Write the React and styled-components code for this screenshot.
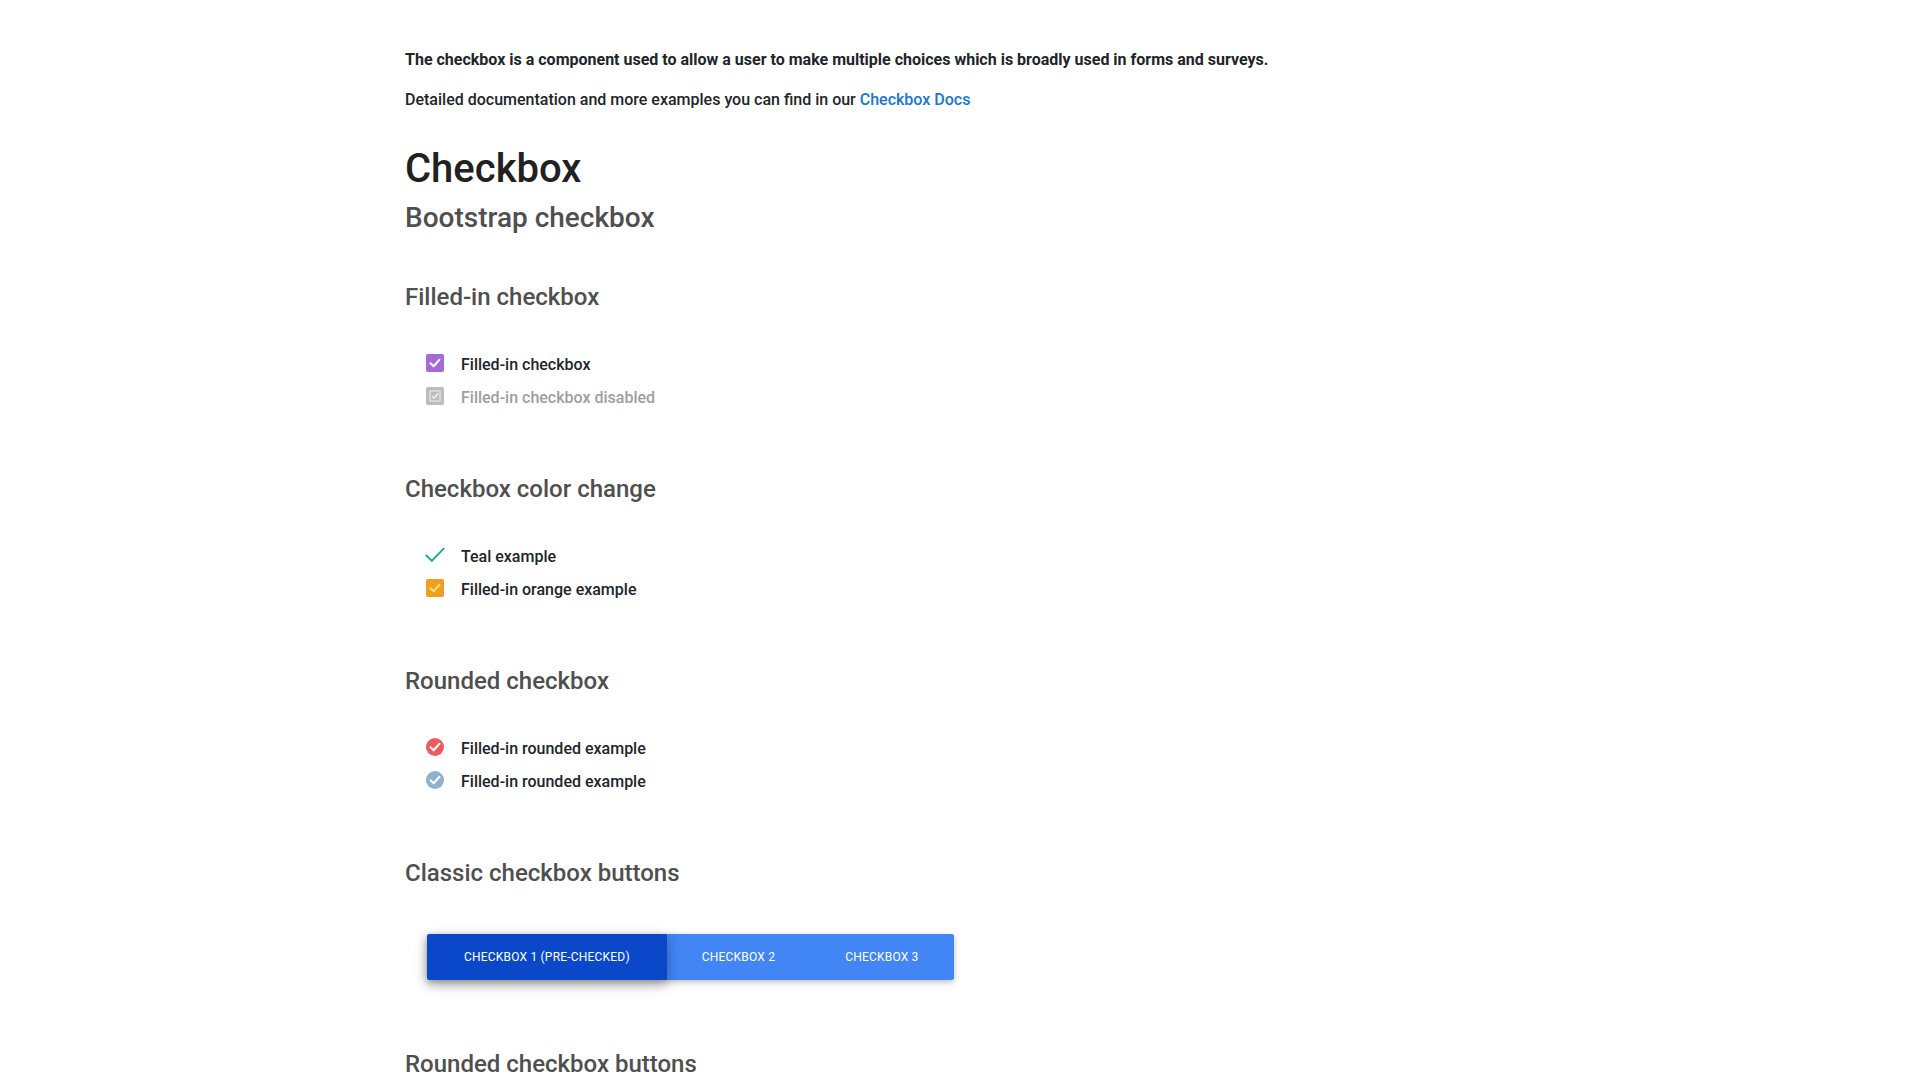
import styled, { createGlobalStyle } from "styled-components";

const GlobalStyle = createGlobalStyle`
  * { box-sizing: border-box; }
  body {
    margin: 0;
    background: #fff;
    font-family: Roboto, "Noto Sans", "Liberation Sans", sans-serif;
    color: #212529;
  }
`;

const Page = styled.main`
  padding: 48px 0 0 405px;
  width: 1920px;
`;

const Intro = styled.p`
  margin: 0 0 16px;
  font-size: 16px;
  line-height: 24px;
  font-weight: ${(p) => (p.strong ? 700 : 500)};
  color: #212529;

  a {
    color: #1976d2;
    text-decoration: none;
  }
`;

const Title = styled.h1`
  margin: 33px 0 8px;
  font-size: 40px;
  line-height: 48px;
  font-weight: 500;
  color: #212121;
`;

const SubTitle = styled.h2`
  margin: 0 0 48px;
  font-size: 28px;
  line-height: 34px;
  font-weight: 500;
  color: #4f4f4f;
`;

const Section = styled.section`
  padding-bottom: ${(p) => p.bottom || 61}px;
`;

const SectionTitle = styled.h4`
  margin: 0 0 ${(p) => p.gap || 36}px;
  font-size: 24px;
  line-height: 29px;
  font-weight: 500;
  color: #4f4f4f;
`;

const Row = styled.label`
  display: flex;
  align-items: center;
  height: 33px;
  padding-left: 20px;
  font-size: 16px;
  font-weight: 500;
  color: ${(p) => (p.disabled ? "#9e9e9e" : "#212529")};
`;

const Mark = styled.span`
  display: inline-flex;
  align-items: center;
  justify-content: center;
  width: 20px;
  height: 20px;
  margin-right: 16px;
  margin-top: -3px;
`;

const Group = styled.div`
  display: inline-flex;
  margin-left: 22px;
  box-shadow: 0 2px 5px 0 rgba(0, 0, 0, 0.16), 0 2px 10px 0 rgba(0, 0, 0, 0.12);
  border-radius: 2px;
`;

const GroupButton = styled.button`
  height: 46px;
  padding: 0 ${(p) => p.pad || 35}px;
  border: none;
  background: ${(p) => (p.active ? "#0b47c9" : "#4285f4")};
  color: #fff;
  font-family: Roboto, "Liberation Sans", sans-serif;
  font-size: 12px;
  letter-spacing: 0.2px;
  text-transform: uppercase;
  box-shadow: ${(p) =>
    p.active ? "0 5px 11px 0 rgba(0,0,0,.18), 0 4px 15px 0 rgba(0,0,0,.15)" : "none"};
  position: relative;
  z-index: ${(p) => (p.active ? 1 : 0)};
  &:first-child { border-radius: 2px 0 0 2px; }
  &:last-child { border-radius: 0 2px 2px 0; }
`;

function BoxCheck({ fill, stroke = "#fff", round }) {
  return (
    <svg width="18" height="18" viewBox="0 0 18 18">
      {round ? (
        <circle cx="9" cy="9" r="9" fill={fill} />
      ) : (
        <rect x="0" y="0" width="18" height="18" rx="2" fill={fill} />
      )}
      <path d="M4.5 9.3 L7.6 12.2 L13.5 5.8" fill="none" stroke={stroke} strokeWidth="2" strokeLinecap="round" strokeLinejoin="round" />
    </svg>
  );
}

function DisabledCheck() {
  return (
    <svg width="18" height="18" viewBox="0 0 18 18">
      <rect x="0" y="0" width="18" height="18" rx="2" fill="#bdbdbd" />
      <rect x="4" y="4" width="10" height="10" fill="none" stroke="#e6e6e6" strokeWidth="1.2" />
      <path d="M6 9.2 L8 11 L12 6.8" fill="none" stroke="#f2f2f2" strokeWidth="1.5" />
    </svg>
  );
}

function TealCheck() {
  return (
    <svg width="22" height="18" viewBox="0 0 22 18">
      <path d="M1.5 9.5 L7.5 15.5 L20.5 2" fill="none" stroke="#26a69a" strokeWidth="2.2" strokeLinecap="round" strokeLinejoin="round" />
    </svg>
  );
}

export default function App() {
  return (
    <>
      <GlobalStyle />
      <Page>
        <Intro strong>
          The checkbox is a component used to allow a user to make multiple choices which is broadly used in forms and surveys.
        </Intro>
        <Intro>
          Detailed documentation and more examples you can find in our <a href="#">Checkbox Docs</a>
        </Intro>

        <Title>Checkbox</Title>
        <SubTitle>Bootstrap checkbox</SubTitle>

        <Section>
          <SectionTitle>Filled-in checkbox</SectionTitle>
          <Row>
            <Mark><BoxCheck fill="#a56ad6" /></Mark>
            Filled-in checkbox
          </Row>
          <Row disabled>
            <Mark><DisabledCheck /></Mark>
            Filled-in checkbox disabled
          </Row>
        </Section>

        <Section>
          <SectionTitle>Checkbox color change</SectionTitle>
          <Row>
            <Mark><TealCheck /></Mark>
            Teal example
          </Row>
          <Row>
            <Mark><BoxCheck fill="#f0a01e" stroke="#ffe27a" /></Mark>
            Filled-in orange example
          </Row>
        </Section>

        <Section>
          <SectionTitle>Rounded checkbox</SectionTitle>
          <Row>
            <Mark><BoxCheck fill="#ef5a5f" round /></Mark>
            Filled-in rounded example
          </Row>
          <Row>
            <Mark><BoxCheck fill="#8fb1cc" round /></Mark>
            Filled-in rounded example
          </Row>
        </Section>

        <Section bottom={70}>
          <SectionTitle gap={46}>Classic checkbox buttons</SectionTitle>
          <Group>
            <GroupButton active pad={37}>Checkbox 1 (pre-checked)</GroupButton>
            <GroupButton>Checkbox 2</GroupButton>
            <GroupButton>Checkbox 3</GroupButton>
          </Group>
        </Section>

        <Section>
          <SectionTitle>Rounded checkbox buttons</SectionTitle>
        </Section>
      </Page>
    </>
  );
}
